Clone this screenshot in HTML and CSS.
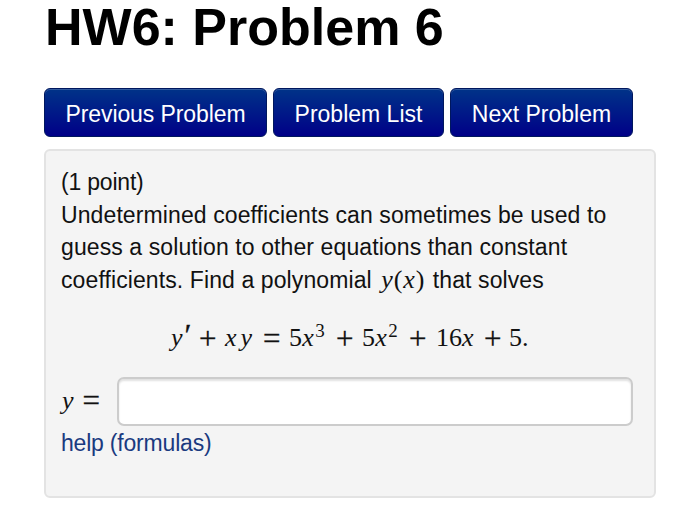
FILE: index.html
```html
<!DOCTYPE html>
<html lang="en">
<head>
<meta charset="utf-8">
<title>HW6: Problem 6</title>
<link rel="stylesheet" href="styles.css">
</head>
<body>
<main class="page">
  <h1 class="title">HW6: Problem 6</h1>
  <nav class="nav">
    <a class="btn btn-prev">Previous Problem</a>
    <a class="btn btn-list">Problem List</a>
    <a class="btn btn-next">Next Problem</a>
  </nav>
  <section class="problem">
    <p class="text">
      <span class="line line-1">(1 point)</span>
      <span class="line line-2">Undetermined coefficients can sometimes be used to</span>
      <span class="line line-3">guess a solution to other equations than constant</span>
      <span class="line line-4">coefficients. Find a polynomial <span class="math inline"><i>y</i>(<i>x</i>)</span> that solves</span>
    </p>
    <div class="equation math">
      <span class="lhs"><i>y</i><i class="prime">′</i></span>
      <span class="op">+</span>
      <span class="product"><i>x</i><i>y</i></span>
      <span class="op">=</span>
      <span class="term">5<i>x</i><sup>3</sup></span>
      <span class="op">+</span>
      <span class="term">5<i>x</i><sup>2</sup></span>
      <span class="op">+</span>
      <span class="linear">16<i>x</i></span>
      <span class="op">+</span>
      <span class="last">5.</span>
    </div>
    <div class="answer">
      <label class="math answer-label" for="ans"><i>y</i><span class="op">=</span></label>
      <input class="answer-input" id="ans" type="text">
    </div>
    <a class="help">help (formulas)</a>
  </section>
</main>
</body>
</html>
```
FILE: styles.css
```css
* { box-sizing: border-box; }
body {
  margin: 0;
  background: #fff;
  color: #111;
  font-family: "Liberation Sans", Arial, sans-serif;
  font-size: 23px;
}
.page { padding: 0 44px; width: 700px; height: 515px; }
.title {
  margin: 0;
  padding-left: 1px;
  height: 88px;
  color: #000;
  font-size: 52px;
  line-height: 54px;
  white-space: nowrap;
}
.nav { display: flex; gap: 6px; height: 49px; }
.btn {
  display: flex;
  align-items: center;
  justify-content: center;
  height: 49px;
  padding-top: 3px;
  border: 1px solid #00175e;
  border-radius: 6px;
  background: linear-gradient(#003388, #000088);
  box-shadow: inset 0 1px 0 rgba(255, 255, 255, .2);
  color: #fff;
  white-space: nowrap;
}
.btn-prev { width: 223px; letter-spacing: -.1px; }
.btn-list { width: 171px; }
.btn-next { width: 183px; }
.problem {
  width: 612px;
  height: 349px;
  margin-top: 12px;
  padding: 15px 15px;
  border: 2px solid #e3e3e3;
  border-radius: 6px;
  background: #f4f4f4;
}
.text { margin: 0; letter-spacing: .1px; }
.line { display: block; height: 32.6px; line-height: 32.6px; white-space: nowrap; }
.line-1 { letter-spacing: -.2px; }
.math { font-family: "Liberation Serif", "Times New Roman", serif; font-size: 26px; }
.inline { margin: 0 1px 0 3px; letter-spacing: .9px; }
.inline, .inline i { line-height: 1; }
.equation {
  display: flex;
  margin: 25px 0 0 110px;
  height: 34px;
  line-height: 34px;
  white-space: nowrap;
}
.equation sup { font-size: 19px; line-height: 0; vertical-align: 9px; margin-left: 1px; }
.op {
  width: 18px;
  font-size: 31px;
  line-height: 36px;
  -webkit-text-stroke: .3px #111;
}
.lhs { width: 28px; }
.prime { font-size: 32px; line-height: 0; -webkit-text-stroke: .3px #111; }
.product { width: 38px; margin-left: 8px; }
.product i + i { margin-left: 4px; }
.term { width: 47px; margin-left: 8px; letter-spacing: .3px; }
.linear { width: 48px; margin-left: 9px; }
.last { margin-left: 7px; }
.answer { display: flex; align-items: center; height: 49px; margin-top: 22px; }
.answer-label { display: flex; width: 56px; align-items: center; gap: 9px; padding-left: 1px; }
.answer-label > * { margin-top: -1px; }
.answer-input {
  width: 516px;
  height: 49px;
  padding: 0 12px;
  border: 2px solid #ccc;
  border-radius: 7px;
  background: #fff;
  box-shadow: inset 0 2px 2px rgba(0, 0, 0, .12);
  font: inherit;
}
.help { display: block; line-height: 34px; color: #1a3a80; letter-spacing: -.2px; }
```
